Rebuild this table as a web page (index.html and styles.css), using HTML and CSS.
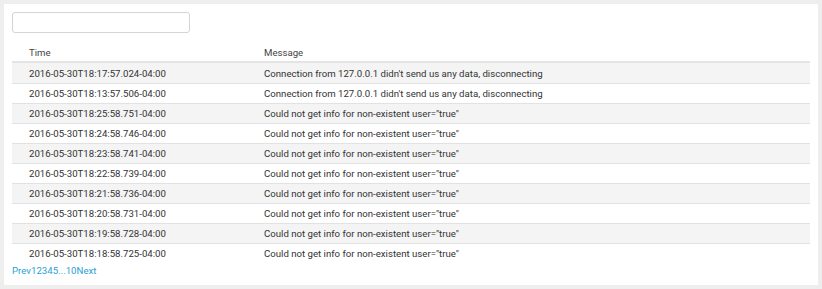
FILE: index.html
```html
<!DOCTYPE html>
<html lang="en">
    <head>
        <meta charset="UTF-8">
        <title>Logs</title>
        <link rel="stylesheet" href="styles.css">
    </head>
    <body>
        <div class="panel">
            <input class="filter" type="text">
            <table class="logs">
                <thead>
                    <tr>
                        <th class="col-time">Time</th>
                        <th>Message</th>
                    </tr>
                </thead>
                <tbody>
                    <tr><td>2016-05-30T18:17:57.024-04:00</td><td>Connection from 127.0.0.1 didn't send us any data, disconnecting</td></tr>
                    <tr><td>2016-05-30T18:13:57.506-04:00</td><td>Connection from 127.0.0.1 didn't send us any data, disconnecting</td></tr>
                    <tr><td>2016-05-30T18:25:58.751-04:00</td><td>Could not get info for non-existent user="true"</td></tr>
                    <tr><td>2016-05-30T18:24:58.746-04:00</td><td>Could not get info for non-existent user="true"</td></tr>
                    <tr><td>2016-05-30T18:23:58.741-04:00</td><td>Could not get info for non-existent user="true"</td></tr>
                    <tr><td>2016-05-30T18:22:58.739-04:00</td><td>Could not get info for non-existent user="true"</td></tr>
                    <tr><td>2016-05-30T18:21:58.736-04:00</td><td>Could not get info for non-existent user="true"</td></tr>
                    <tr><td>2016-05-30T18:20:58.731-04:00</td><td>Could not get info for non-existent user="true"</td></tr>
                    <tr><td>2016-05-30T18:19:58.728-04:00</td><td>Could not get info for non-existent user="true"</td></tr>
                    <tr><td>2016-05-30T18:18:58.725-04:00</td><td>Could not get info for non-existent user="true"</td></tr>
                </tbody>
            </table>
            <div class="pager">
                <a href="#">Prev</a><a href="#">1</a><a href="#">2</a><a href="#">3</a><a href="#">4</a><a href="#">5</a><span>...</span><a href="#">10</a><a href="#">Next</a>
            </div>
        </div>
    </body>
</html>
```

FILE: styles.css
```css
body{
    margin: 0;
    background: #eeeeee;
    font-family: Roboto, "Liberation Sans", sans-serif;
    font-size: 9.65px;
    color: #333;
}
.panel{
    margin: 4px;
    height: 281px;
    box-sizing: border-box;
    padding: 8px;
    background: #fff;
}
.filter{
    display: block;
    width: 178px;
    height: 21px;
    box-sizing: border-box;
    margin: 0 0 10px 0;
    border: 1px solid #d4d4d4;
    border-radius: 3px;
    background: #fff;
}
.logs{
    width: 100%;
    border-collapse: collapse;
}
.logs th{
    font-weight: normal;
    text-align: left;
    color: #444;
    height: 17px;
    padding: 1px 17px 0;
    border-bottom: 2px solid #e4e4e4;
}
.col-time{
    width: 201px;
}
.logs td{
    height: 19px;
    padding: 0 17px;
    border-top: 1px solid #e2e2e2;
}
.logs tbody tr:first-child td{
    border-top: none;
    height: 20px;
}
.logs tbody tr:nth-child(odd){
    background: #f4f4f4;
}
.pager{
    margin-top: 1px;
    line-height: 14px;
}
.pager a, .pager span{
    color: #2a9fd6;
    text-decoration: none;
}
```
